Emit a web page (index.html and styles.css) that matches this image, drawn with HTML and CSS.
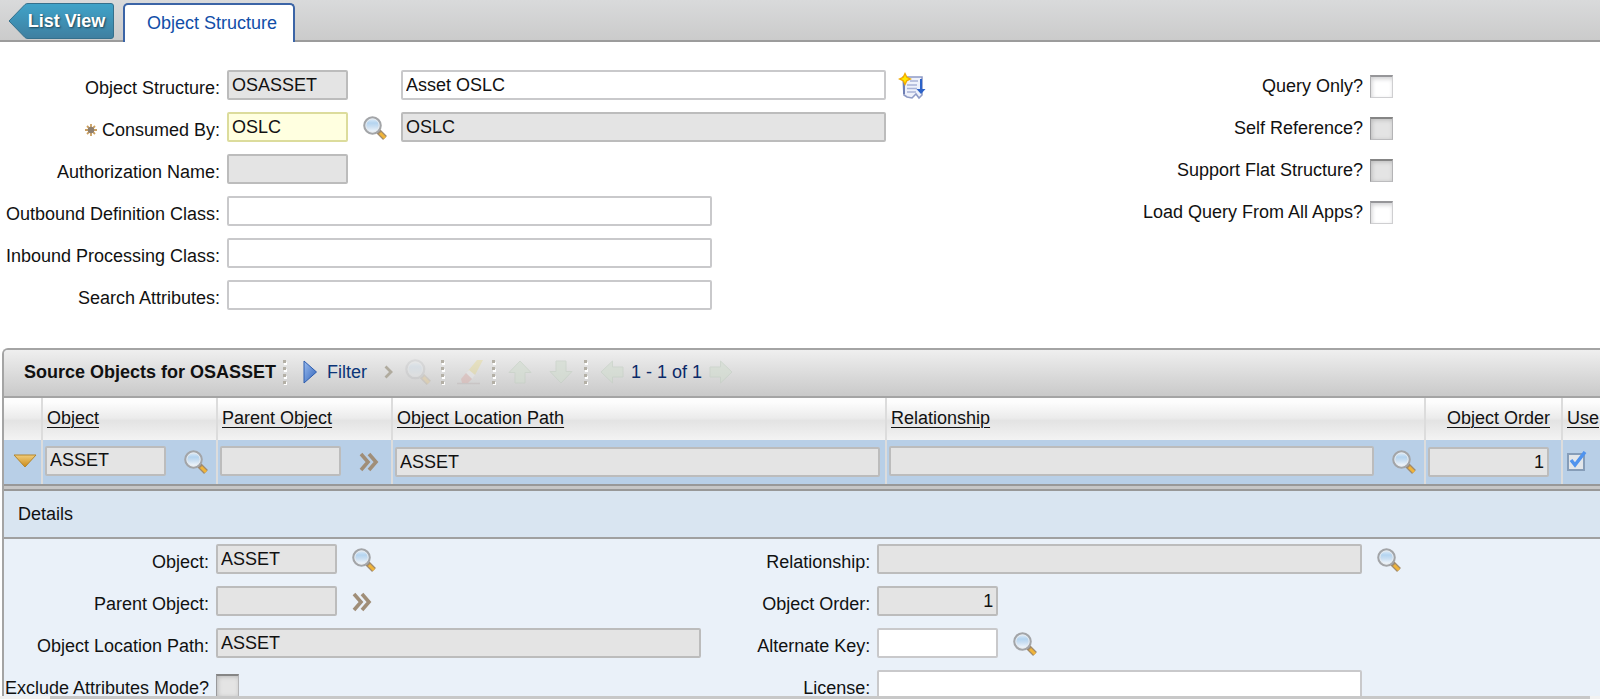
FILE: index.html
```html
<!DOCTYPE html>
<html lang="en">
<head>
<meta charset="utf-8">
<title>Object Structure</title>
<link rel="stylesheet" href="styles.css">
</head>
<body>
<svg class="defs" aria-hidden="true">
  <defs>
    <linearGradient id="teal" x1="0" y1="0" x2="0" y2="1"><stop offset="0" stop-color="#3fa3c9"/><stop offset="1" stop-color="#3f7fa0"/></linearGradient>
    <linearGradient id="lens" x1="0" y1="0" x2="0" y2="1"><stop offset="0" stop-color="#eaf3fb"/><stop offset=".35" stop-color="#b4d4f0"/><stop offset=".6" stop-color="#cde0f2"/><stop offset="1" stop-color="#ffffff"/></linearGradient>
    <linearGradient id="blue" x1="0" y1="0" x2="1" y2="1"><stop offset="0" stop-color="#9cbdf0"/><stop offset="1" stop-color="#2f62b8"/></linearGradient>
    <linearGradient id="gold" x1="0" y1="0" x2="0" y2="1"><stop offset="0" stop-color="#f0cd7c"/><stop offset="1" stop-color="#cc8a18"/></linearGradient>
    <symbol id="search" viewBox="0 0 24 24">
      <path d="M15.5 15.5l6.500 6.500" stroke="#a08a6c" stroke-width="5.500"/>
      <path d="M17 17l5 5" stroke="#f0b43a" stroke-width="3"/>
      <circle cx="9.5" cy="9.5" r="8.2" fill="url(#lens)" stroke="#a3a5a8" stroke-width="2.2"/>
      <circle cx="9.5" cy="9.5" r="6.6" fill="none" stroke="#e6eaee" stroke-width="1"/>
    </symbol>
    <symbol id="chevrons" viewBox="0 0 20 20">
      <path d="M2 2l7 8-7 8M10 2l7 8-7 8" fill="none" stroke="#a08e78" stroke-width="3.6"/>
    </symbol>
    <symbol id="arrow" viewBox="0 0 24 24">
      <path d="M12 1L23 12.500H17V23H7V12.500H1Z" fill="#d2ddd0" stroke="#c3cfc2" stroke-width="1"/>
    </symbol>
    <symbol id="dots" viewBox="0 0 4 26">
      <path d="M1 3h3v3h-3zM1 10h3v3h-3zM1 17h3v3h-3zM1 23h3v3h-3z" fill="#fff"/>
      <path d="M0 1h3v3H0zM0 8h3v3H0zM0 15h3v3H0zM0 22h3v3H0z" fill="#b4b0a6"/>
    </symbol>
  </defs>
</svg>

<nav class="tabs">
  <button class="back" type="button">
    <svg class="back-shape" viewBox="0 0 106 36" aria-hidden="true"><path d="M1 18L17 1.500Q18 .5 20 .5H103Q105.500 .5 105.500 3V33Q105.500 35.500 103 35.500H20Q18 35.500 17 34.500Z" fill="url(#teal)" stroke="#35708c"/></svg>
    <span class="back-text">List View</span>
  </button>
  <a class="tab" href="#structure">Object Structure</a>
</nav>

<main class="content">
  <form class="header-form" id="structure">
    <div class="rows">
      <div class="row"><label class="label" for="os">Object Structure:</label><input class="field" id="os" value="OSASSET" readonly><span class="slot"></span><input class="field wide editable" aria-label="Description" value="Asset OSLC">
        <button class="icon-btn" type="button" aria-label="Long description"><svg class="doc" viewBox="0 0 28 28" aria-hidden="true">
          <path d="M5 5H24V23L21 26L18 22L14 26L9 25L6 23Z" fill="#eef1fb" stroke="#8f9bc6" stroke-width="1.600"/>
          <path d="M6 5V22" stroke="#6f7fb4" stroke-width="2"/>
          <path d="M12 9h8M9 13h10M9 16.500h10M9 20h9" stroke="#a9b3d6" stroke-width="1.500"/>
          <path d="M23 7V18" stroke="#2c62c8" stroke-width="2"/><path d="M18.500 17H27.500L23 22Z" fill="#2c62c8"/>
          <path d="M7 0L9.300 4.700L14 7L9.300 9.300L7 14L4.700 9.300L0 7L4.700 4.700Z" fill="#f2a900"/><path d="M7 3L8.300 5.700L11 7L8.300 8.300L7 11L5.700 8.300L3 7L5.700 5.700Z" fill="#ffe800"/>
        </svg></button></div>
      <div class="row"><label class="label" for="cb"><svg class="star" viewBox="0 0 12 12" aria-hidden="true"><path d="M6 0V12M0 6H12M2 2L10 10M10 2L2 10" stroke="#cba060" stroke-width="1.800"/><circle cx="6" cy="6" r="3.200" fill="#8d7f70"/></svg>Consumed By:</label><input class="field required" id="cb" value="OSLC" required><span class="slot"><button class="icon-btn" type="button" aria-label="Select value"><svg class="i24"><use href="#search"/></svg></button></span><input class="field wide" aria-label="Consumed by description" value="OSLC" readonly></div>
      <div class="row"><label class="label" for="an">Authorization Name:</label><input class="field" id="an" readonly></div>
      <div class="row"><label class="label" for="oc">Outbound Definition Class:</label><input class="field wide editable" id="oc"></div>
      <div class="row"><label class="label" for="ic">Inbound Processing Class:</label><input class="field wide editable" id="ic"></div>
      <div class="row"><label class="label" for="sa">Search Attributes:</label><input class="field wide editable" id="sa"></div>
    </div>
    <div class="rows checks">
      <div class="check-row"><label for="q">Query Only?</label><input class="check" type="checkbox" id="q"></div>
      <div class="check-row"><label for="sr">Self Reference?</label><input class="check" type="checkbox" id="sr" disabled></div>
      <div class="check-row"><label for="sf">Support Flat Structure?</label><input class="check" type="checkbox" id="sf" disabled></div>
      <div class="check-row"><label for="lq">Load Query From All Apps?</label><input class="check" type="checkbox" id="lq"></div>
    </div>
  </form>

  <section class="panel">
    <div class="toolbar">
      <h2 class="title">Source Objects for OSASSET</h2>
      <svg class="dots"><use href="#dots"/></svg>
      <button class="filter" type="button"><svg class="play" viewBox="0 0 14 24" aria-hidden="true"><path d="M1 1L13.500 12L1 23Z" fill="url(#blue)" stroke="#2c5cae"/></svg>Filter</button>
      <svg class="next" viewBox="0 0 9 14" aria-hidden="true"><path d="M1.500 1.500L7 7L1.500 12.500" fill="none" stroke="#b0ab9e" stroke-width="2.800"/></svg>
      <button class="icon-btn" type="button" aria-label="Search" disabled><svg class="i26 faint"><use href="#search"/></svg></button>
      <svg class="dots"><use href="#dots"/></svg>
      <button class="icon-btn" type="button" aria-label="Clear" disabled><svg class="eraser" viewBox="0 0 26 26" aria-hidden="true"><path d="M0 24.500H23" stroke="#b8acac" stroke-width="1.500"/><path d="M11 12L20 1H26L18 16Z" fill="#e6d67c"/><path d="M9 14L12 11L18 16L15 20Z" fill="#eee"/><path d="M4 20L9 14L15 20L11 24H5Z" fill="#dca09a"/></svg></button>
      <svg class="dots"><use href="#dots"/></svg>
      <button class="icon-btn" type="button" aria-label="Previous row" disabled><svg class="arrow"><use href="#arrow"/></svg></button>
      <button class="icon-btn down" type="button" aria-label="Next row" disabled><svg class="arrow"><use href="#arrow"/></svg></button>
      <svg class="dots"><use href="#dots"/></svg>
      <div class="pager">
        <button class="icon-btn left" type="button" aria-label="Previous page" disabled><svg class="arrow"><use href="#arrow"/></svg></button>
        <span>1 - 1 of 1</span>
        <button class="icon-btn right" type="button" aria-label="Next page" disabled><svg class="arrow"><use href="#arrow"/></svg></button>
      </div>
    </div>

    <table class="grid">
      <colgroup><col class="c-toggle"><col class="c-short"><col class="c-short"><col class="c-path"><col class="c-rel"><col class="c-order"><col></colgroup>
      <thead>
        <tr><th></th><th><a href="#object">Object</a></th><th><a href="#parent">Parent Object</a></th><th><a href="#path">Object Location Path</a></th><th><a href="#relationship">Relationship</a></th><th class="num"><a href="#order">Object Order</a></th><th><a href="#use">Use</a></th></tr>
      </thead>
      <tbody>
        <tr>
          <td><button class="icon-btn toggle" type="button" aria-label="Hide details"><svg class="down-tri" viewBox="0 0 24 14" aria-hidden="true"><path d="M1 1H23L12 13Z" fill="url(#gold)" stroke="#b3852c"/></svg></button></td>
          <td><div class="cell"><input class="field" aria-label="Object" value="ASSET" readonly><button class="icon-btn" type="button" aria-label="Select object"><svg class="i24"><use href="#search"/></svg></button></div></td>
          <td><div class="cell"><input class="field" aria-label="Parent object" readonly><button class="icon-btn" type="button" aria-label="Parent menu"><svg class="i20"><use href="#chevrons"/></svg></button></div></td>
          <td><div class="cell"><input class="field wide" aria-label="Object location path" value="ASSET" readonly></div></td>
          <td><div class="cell"><input class="field wide" aria-label="Relationship" readonly><button class="icon-btn" type="button" aria-label="Select relationship"><svg class="i24"><use href="#search"/></svg></button></div></td>
          <td><div class="cell"><input class="field num" aria-label="Object order" value="1" readonly></div></td>
          <td><div class="cell"><label class="tick"><input class="tick-input" type="checkbox" aria-label="Use" checked><svg class="tick-mark" viewBox="0 0 20 20" aria-hidden="true"><path d="M4 9L8 14L18 1" fill="none" stroke="#4f93ee" stroke-width="3.500"/></svg></label></div></td>
        </tr>
      </tbody>
    </table>

    <div class="divider"></div>
    <h3 class="details-title">Details</h3>
    <form class="details">
      <div class="rows">
        <div class="row"><label class="label" for="do">Object:</label><input class="field" id="do" value="ASSET" readonly><span class="slot"><button class="icon-btn" type="button" aria-label="Select object"><svg class="i24"><use href="#search"/></svg></button></span></div>
        <div class="row"><label class="label" for="dp">Parent Object:</label><input class="field" id="dp" readonly><span class="slot"><button class="icon-btn" type="button" aria-label="Parent menu"><svg class="i20"><use href="#chevrons"/></svg></button></span></div>
        <div class="row"><label class="label" for="dl">Object Location Path:</label><input class="field wide" id="dl" value="ASSET" readonly></div>
        <div class="row"><label class="label" for="de">Exclude Attributes Mode?</label><input class="check" type="checkbox" id="de" disabled></div>
      </div>
      <div class="rows">
        <div class="row"><label class="label" for="dr">Relationship:</label><input class="field wide" id="dr" readonly><span class="slot"><button class="icon-btn" type="button" aria-label="Select relationship"><svg class="i24"><use href="#search"/></svg></button></span></div>
        <div class="row"><label class="label" for="dn">Object Order:</label><input class="field num" id="dn" value="1" readonly></div>
        <div class="row"><label class="label" for="dk">Alternate Key:</label><input class="field editable" id="dk"><span class="slot"><button class="icon-btn" type="button" aria-label="Select key"><svg class="i24"><use href="#search"/></svg></button></span></div>
        <div class="row"><label class="label" for="li">License:</label><input class="field wide editable" id="li"></div>
      </div>
    </form>
  </section>
</main>
<div class="scrollbar"><div class="thumb"></div></div>
</body>
</html>
```

FILE: styles.css
```css
* { box-sizing: border-box; }
body {
  margin: 0;
  height: 100vh;
  display: flex;
  flex-direction: column;
  overflow: hidden;
  background: #fff;
  color: #111;
  font: 18px "Liberation Sans", Arial, sans-serif;
}
button, input { font: inherit; color: inherit; }
button { border: 0; background: none; padding: 0; }
svg { display: block; flex: none; }
.defs { position: absolute; width: 0; height: 0; }

.tabs {
  flex: none;
  display: flex;
  align-items: flex-start;
  gap: 9px;
  height: 42px;
  padding: 3px 0 0 8px;
  background: linear-gradient(#d9dadb, #cbcbcb);
  border-bottom: 2px solid #9c9c9c;
}
.back { position: relative; width: 106px; height: 36px; color: #fff; font-weight: bold; }
.back-shape { position: absolute; inset: 0; width: 106px; height: 36px; }
.back-text { position: relative; padding-left: 11px; line-height: 34px; text-shadow: 1px 1px 2px #1d4254; }
.tab {
  width: 172px;
  height: 39px;
  padding-left: 6px;
  border: 2px solid #3b64a6;
  border-bottom: 0;
  border-radius: 5px 5px 0 0;
  background: #fff;
  color: #114ea8;
  line-height: 36px;
  text-align: center;
  text-decoration: none;
}

.content { flex: 1; min-height: 0; overflow: hidden; }
.header-form { display: grid; grid-template-columns: 60% 1fr; padding-top: 28px; }
.rows { display: flex; flex-direction: column; gap: 12px; }
.row { display: flex; align-items: flex-start; height: 30px; }
.label {
  flex: none;
  display: flex;
  justify-content: flex-end;
  align-items: center;
  gap: 5px;
  width: 227px;
  padding-right: 7px;
  line-height: 36px;
  white-space: nowrap;
}
.star { width: 12px; height: 12px; }
.field {
  flex: none;
  width: 121px;
  height: 30px;
  padding: 0 3px;
  border: 2px solid #bcbcbc;
  border-radius: 2px;
  background: #e4e4e4;
  outline: 0;
}
.field.wide { width: 485px; }
.field.editable { background: #fff; border-color: #c9c9cb; }
.field.required { background: #ffffe0; border-color: #dcdc9c; }
.field.num { text-align: right; }
.slot { flex: none; width: 53px; height: 32px; padding-left: 15px; display: flex; align-items: center; }
.icon-btn { flex: none; }
.row > .icon-btn { padding: 2px 0 0 12px; }
.doc { width: 28px; height: 28px; }
.i20 { width: 20px; height: 20px; }
.i24 { width: 24px; height: 24px; }
.i26 { width: 26px; height: 26px; }

.check-row { display: flex; align-items: center; gap: 7px; height: 30px; line-height: 30px; padding-top: 2px; }
.check-row label { width: 403px; text-align: right; white-space: nowrap; }
.check {
  appearance: none;
  flex: none;
  width: 23px;
  height: 23px;
  margin: 0;
  border: 1px solid #cfcfd1;
  border-top: 2px solid #969699;
  border-left-color: #b0b0b2;
  background: #fff;
  box-shadow: inset 1px 2px 4px #d0d0d2;
}
.check:disabled { background: #e4e4e4; border-color: #858585 #b4b4b6 #bcbcbe #99999b; box-shadow: inset 1px 1px 4px #bababa; }
.row > .check { margin-top: 4px; }

.panel {
  margin: 38px 0 0 2px;
  border: 2px solid #a4a4a4;
  border-right: 0;
  border-top-left-radius: 6px;
  overflow: hidden;
  background: #eaf1f9;
}
.toolbar {
  display: flex;
  align-items: center;
  height: 48px;
  padding: 0 0 2px 20px;
  background: linear-gradient(#efefef, #c9c9c9);
  border-bottom: 2px solid #a4a4a4;
}
.title { margin: 0; width: 259px; font-size: 18px; font-weight: bold; white-space: nowrap; }
.dots { width: 4px; height: 26px; margin-right: 12px; }
.filter { display: flex; align-items: center; gap: 10px; margin: 0 17px 0 4px; color: #0b3578; }
.play { width: 14px; height: 24px; }
.next { width: 9px; height: 14px; margin-right: 12px; }
.faint { opacity: .2; margin-right: 10px; }
.eraser { width: 26px; height: 26px; margin: 0 9px 0 0; opacity: .35; }
.arrow { width: 24px; height: 24px; opacity: .6; }
.toolbar > .icon-btn .arrow { margin-right: 11px; }
.down { margin-left: 6px; }
.down svg { transform: scaleY(-1); }
.left svg { transform: rotate(-90deg); }
.right svg { transform: rotate(90deg); }
.pager { display: flex; align-items: center; gap: 7px; color: #0b2a68; white-space: nowrap; }

.grid { width: 100%; table-layout: fixed; border-collapse: separate; border-spacing: 0; }
.c-toggle { width: 39px; }
.c-short { width: 175px; }
.c-path { width: 494px; }
.c-rel { width: 539px; }
.c-order { width: 137px; }
.grid th, .grid td { padding: 0; border-right: 2px solid #dcdcdc; }
.grid th {
  height: 42px;
  padding: 0 11px 2px 4px;
  background: linear-gradient(#fdfdfd 10%, #ebebeb 48%, #e3e3e3 54%, #f3f3f3);
  font-weight: normal;
  text-align: left;
  white-space: nowrap;
}
.grid th:last-child, .grid td:last-child { border-right: 0; }
.grid th:last-child { padding-right: 0; }
.grid th.num { text-align: right; }
.grid a { color: inherit; text-underline-offset: 3px; text-decoration-thickness: 1px; }
.grid td { height: 44px; background: #b8cfe7; }
.cell { display: flex; align-items: center; gap: 18px; padding-left: 2px; }
.cell .field:not(:last-child) { margin-bottom: 3px; }
.toggle { padding: 2px 0 0 9px; }
.down-tri { width: 24px; height: 14px; }
.tick { position: relative; padding-left: 2px; }
.tick-input { appearance: none; display: block; width: 18px; height: 18px; margin: 0; border: 2px solid #869db8; background: #e2e6ea; }
.tick-mark { position: absolute; left: 2px; top: -2px; width: 20px; height: 20px; pointer-events: none; }

.divider { height: 7px; border: solid #989898; border-width: 2px 0; background: #c6c6c6; }
.details-title {
  margin: 0;
  height: 48px;
  padding-left: 14px;
  border-bottom: 2px solid #a0a0a0;
  background: #d9e5f1;
  font-size: 18px;
  font-weight: normal;
  line-height: 46px;
}
.details { display: grid; grid-template-columns: 42% 1fr; padding: 5px 0 20px; }
.details .label { width: 212px; }
.details .rows + .rows .label { width: 203px; }

.scrollbar { flex: none; height: 3px; padding: 0 10px 0 50px; background: #f1f1f1; }
.thumb { height: 3px; background: #c8c8c8; }
```
